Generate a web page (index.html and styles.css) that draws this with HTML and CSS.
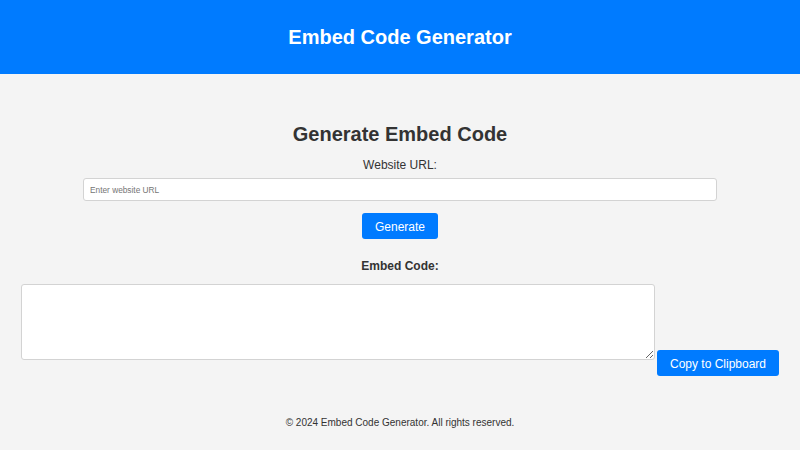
FILE: index.html
```html
<!DOCTYPE html>
<html lang="en">
<head>
<meta charset="utf-8">
<title>Embed Code Generator</title>
<link rel="stylesheet" href="styles.css">
</head>
<body>
<header class="site-header">
  <h1 class="site-title">Embed Code Generator</h1>
</header>
<main class="main">
  <h2 class="section-title">Generate Embed Code</h2>
  <label class="field-label" for="url">Website URL:</label>
  <input class="url-input" id="url" type="text" placeholder="Enter website URL">
  <button class="btn btn-generate" type="button">Generate</button>
  <div class="embed-label">Embed Code:</div>
  <div class="embed-row">
    <textarea class="embed-output" readonly></textarea>
    <button class="btn btn-copy" type="button">Copy to Clipboard</button>
  </div>
</main>
<footer class="site-footer">
  <p class="footer-text">&copy; 2024 Embed Code Generator. All rights reserved.</p>
</footer>
</body>
</html>
```

FILE: styles.css
```css
* { box-sizing: border-box; }

html, body {
  margin: 0;
  padding: 0;
}

body {
  background: #f4f4f4;
  color: #333;
  font-family: "Liberation Sans", Arial, sans-serif;
}

.site-header {
  background: #007bff;
  color: #fff;
  padding: 25px 0;
  text-align: center;
}

.site-title {
  margin: 0;
  font-size: 20px;
  line-height: 24px;
  font-weight: bold;
}

.main {
  display: flex;
  flex-direction: column;
  align-items: center;
  padding-top: 48px;
}

.section-title {
  margin: 0;
  font-size: 20px;
  line-height: 24px;
  font-weight: bold;
}

.field-label {
  margin-top: 12px;
  font-size: 12px;
  line-height: 15px;
}

.url-input {
  margin-top: 5px;
  width: 634px;
  height: 23px;
  padding: 0 6px;
  border: 1px solid #d3d3d3;
  border-radius: 3px;
  background: #fff;
  font-family: "Liberation Sans", Arial, sans-serif;
  font-size: 8.3px;
  color: #333;
}

.url-input::placeholder {
  color: #757575;
}

.btn {
  background: #007bff;
  color: #fff;
  border: none;
  border-radius: 3px;
  font-family: "Liberation Sans", Arial, sans-serif;
  font-size: 12px;
  line-height: 14px;
  height: 26px;
  padding: 1px 12.5px 0;
  cursor: pointer;
}

.btn-generate {
  margin-top: 12px;
}

.embed-label {
  margin-top: 20px;
  font-size: 12px;
  line-height: 14px;
  font-weight: bold;
}

.embed-row {
  margin-top: 11px;
  display: flex;
  align-items: flex-end;
  justify-content: center;
  gap: 2px;
}

.embed-output {
  width: 634px;
  height: 76px;
  margin-bottom: 16px;
  border: 1px solid #d3d3d3;
  border-radius: 3px;
  background: #fff;
  display: block;
}

.btn-copy {
  padding: 1px 13px 0;
}

.site-footer {
  text-align: center;
  padding-top: 41px;
}

.footer-text {
  margin: 0;
  font-size: 10px;
  line-height: 12px;
}
```
